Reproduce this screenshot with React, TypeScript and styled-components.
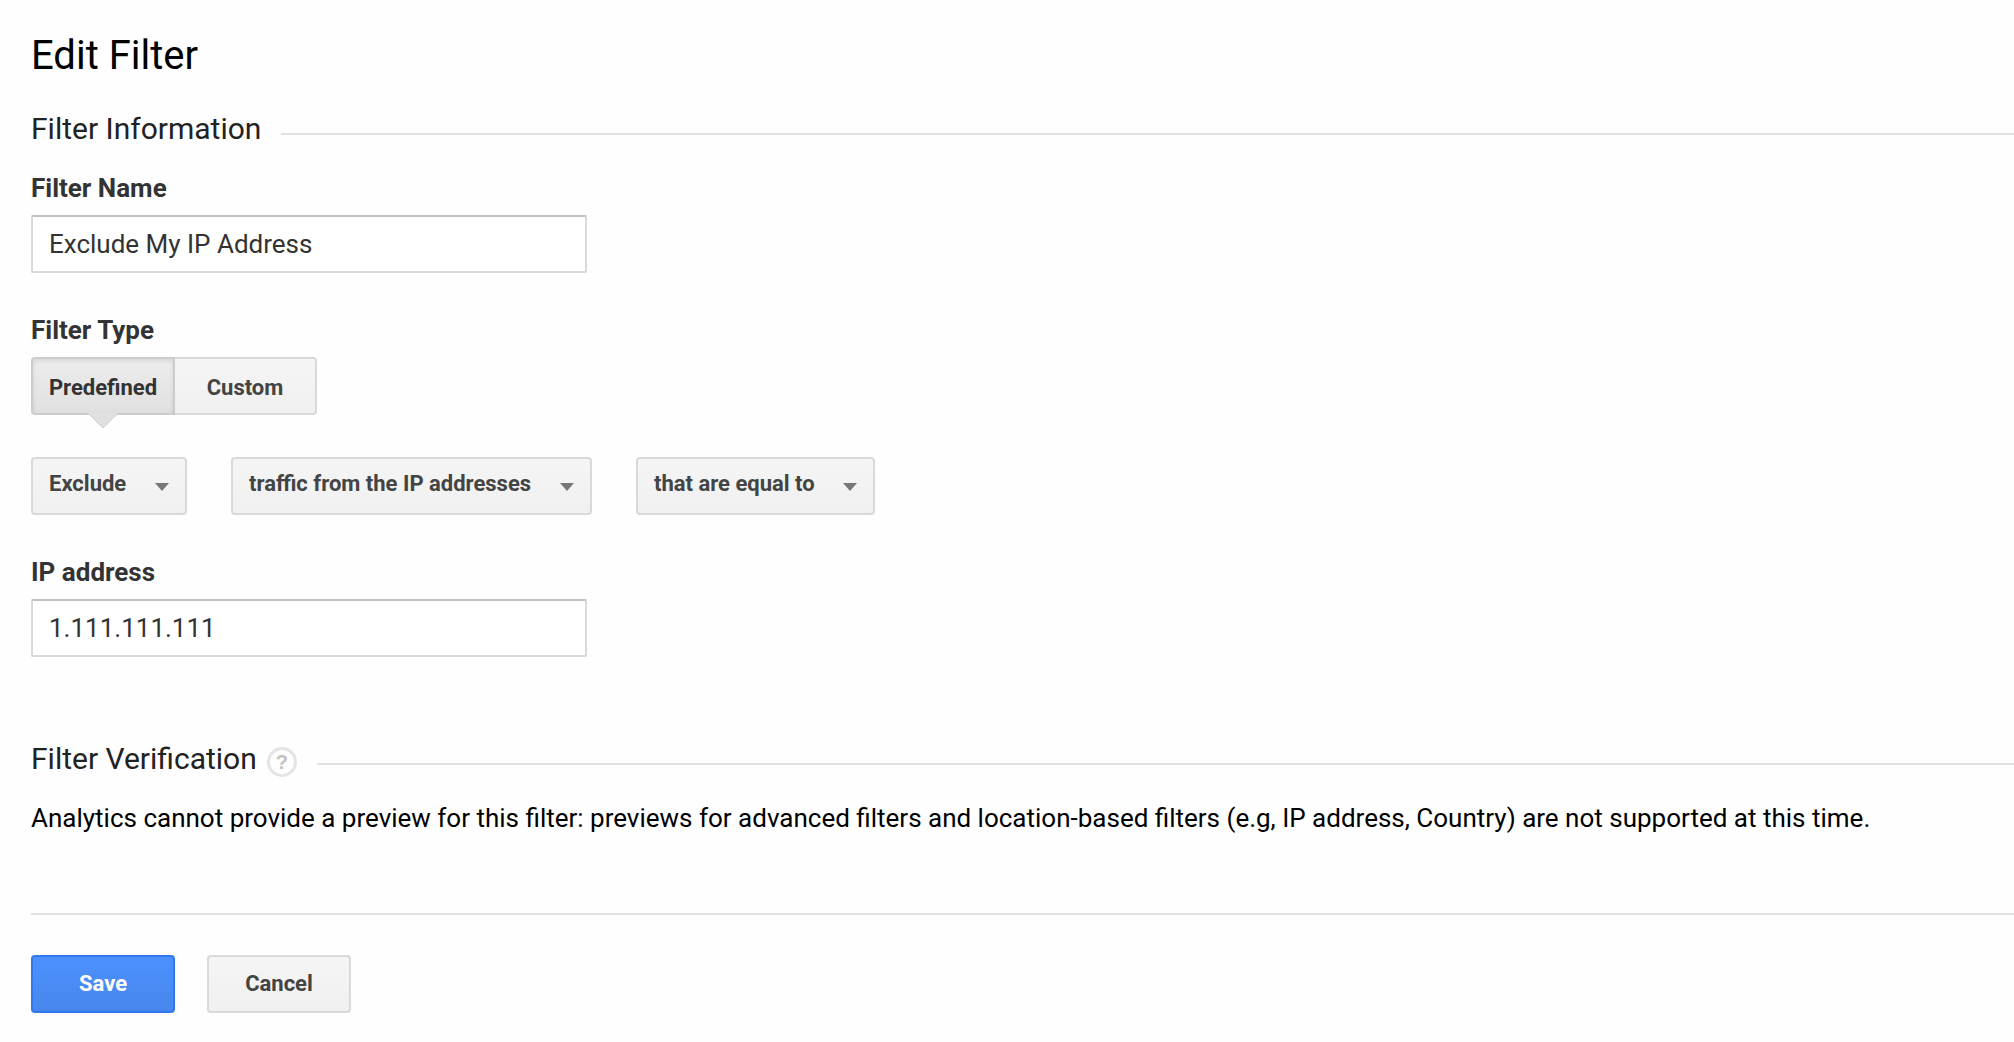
import React, { useState } from "react";
import styled, { createGlobalStyle, css } from "styled-components";

const GlobalStyle = createGlobalStyle`
  *, *::before, *::after { box-sizing: border-box; }
  body {
    margin: 0;
    background: #fefefe;
    color: #000;
    font-family: Roboto, "Liberation Sans", sans-serif;
    font-size: 26px;
    line-height: 32px;
  }
`;

const Page = styled.main`
  padding: 32px 0 28px 31px;
`;

const Title = styled.h1`
  margin: 0 0 31px;
  font-size: 40px;
  font-weight: 400;
  line-height: 48px;
`;

const SectionHeader = styled.div`
  display: flex;
  align-items: flex-end;
  margin-bottom: 25px;

  &::after {
    content: "";
    flex: 1;
    height: 2px;
    margin: 0 0 12px 20px;
    background: #e2e2e2;
  }
`;

const SectionTitle = styled.h2`
  margin: 0;
  color: #222;
  font-size: 30px;
  font-weight: 400;
  line-height: 36px;
`;

const HelpButton = styled.button`
  display: block;
  width: 30px;
  height: 30px;
  margin-left: 10px;
  padding: 0;
  border: 3px solid #e4e4e4;
  border-radius: 50%;
  background: transparent;
  color: #c2c2c2;
  font-family: "Liberation Sans", sans-serif;
  font-size: 20px;
  font-weight: 700;
  line-height: 24px;
  text-align: center;
`;

const Field = styled.div`
  display: flex;
  flex-direction: column;
  align-items: flex-start;
  gap: 11px;
`;

const labelText = css`
  color: #333;
  font-size: 26px;
  font-weight: 700;
  line-height: 32px;
`;

const Label = styled.label`
  ${labelText}
`;

const GroupLabel = styled.span`
  ${labelText}
`;

const TextInput = styled.input`
  width: 556px;
  max-width: 100%;
  height: 58px;
  padding: 0 16px;
  border: 2px solid #d9d9d9;
  border-top-color: #c0c0c0;
  border-radius: 2px;
  background: #fff;
  color: #333;
  font: inherit;
`;

const FilterForm = styled.form`
  display: flex;
  flex-direction: column;
  gap: 41px;
`;

const FilterDefinition = styled.div`
  display: flex;
  flex-direction: column;
  gap: 42px;
`;

const buttonFace = css`
  height: 58px;
  border: 2px solid #d9d9d9;
  border-radius: 4px;
  background: linear-gradient(#f5f5f5, #f0f0f0);
  color: #444;
  font-family: inherit;
  font-size: 22px;
  font-weight: 700;
  line-height: 32px;
`;

const ToggleGroup = styled.div`
  display: flex;
`;

const ToggleButton = styled.button<{ $active: boolean }>`
  ${buttonFace}
  position: relative;
  width: 144px;
  padding: 4px 0 0;

  &:first-child {
    border-radius: 4px 0 0 4px;
  }

  &:last-child {
    width: 142px;
    border-left: 0;
    border-radius: 0 4px 4px 0;
  }

  ${({ $active }) =>
    $active &&
    css`
      border-color: #ccc;
      background: linear-gradient(#ededed, #e0e0e0);
      box-shadow: inset 0 2px 4px rgba(0, 0, 0, 0.1);
      color: #333;
    `}
`;

const Pointer = styled.svg`
  position: absolute;
  top: 54px;
  left: 50%;
  margin-left: -15px;
`;

const Rules = styled.div`
  display: flex;
  flex-wrap: wrap;
  gap: 44px;
`;

const SelectBox = styled.div`
  position: relative;
`;

const Select = styled.select`
  ${buttonFace}
  display: block;
  appearance: none;
  padding: 0 58px 4px 16px;
`;

const Caret = styled.svg`
  position: absolute;
  top: 26px;
  right: 18px;
  pointer-events: none;
`;

const Verification = styled.section`
  margin-top: 84px;
`;

const Note = styled.p`
  margin: 0;
`;

const Footer = styled.footer`
  display: flex;
  gap: 32px;
  margin-top: 79px;
  padding-top: 40px;
  border-top: 2px solid #e2e2e2;
`;

const ActionButton = styled.button<{ $primary?: boolean }>`
  ${buttonFace}
  width: 144px;
  padding: 0;

  ${({ $primary }) =>
    $primary &&
    css`
      border-color: #3079ed;
      background: linear-gradient(#4d90fe, #4787ed);
      color: #fff;
    `}
`;

const filterTypes = ["Predefined", "Custom"];

const rules = [
  { label: "Filter action", value: "Exclude" },
  { label: "Source or destination", value: "traffic from the IP addresses" },
  { label: "Expression", value: "that are equal to" },
];

export default function App() {
  const [filterType, setFilterType] = useState("Predefined");

  return (
    <>
      <GlobalStyle />
      <Page>
        <Title>Edit Filter</Title>
        <SectionHeader>
          <SectionTitle>Filter Information</SectionTitle>
        </SectionHeader>
        <FilterForm id="filter-form" onSubmit={(e) => e.preventDefault()}>
          <Field>
            <Label htmlFor="filter-name">Filter Name</Label>
            <TextInput id="filter-name" defaultValue="Exclude My IP Address" />
          </Field>
          <FilterDefinition>
            <Field>
              <GroupLabel id="filter-type">Filter Type</GroupLabel>
              <ToggleGroup role="group" aria-labelledby="filter-type">
                {filterTypes.map((type) => (
                  <ToggleButton
                    key={type}
                    type="button"
                    $active={type === filterType}
                    aria-pressed={type === filterType}
                    onClick={() => setFilterType(type)}
                  >
                    {type}
                    {type === filterType && (
                      <Pointer width="30" height="16" viewBox="0 0 30 16" aria-hidden="true">
                        <path d="M0 0H30L15 15Z" fill="#e0e0e0" />
                        <path d="M1 1L15 15L29 1" fill="none" stroke="#ccc" />
                      </Pointer>
                    )}
                  </ToggleButton>
                ))}
              </ToggleGroup>
            </Field>
            <Rules>
              {rules.map((rule) => (
                <SelectBox key={rule.value}>
                  <Select aria-label={rule.label}>
                    <option>{rule.value}</option>
                  </Select>
                  <Caret width="14" height="8" viewBox="0 0 14 8" aria-hidden="true">
                    <path d="M0 0H14L7 8Z" fill="#777" />
                  </Caret>
                </SelectBox>
              ))}
            </Rules>
          </FilterDefinition>
          <Field>
            <Label htmlFor="ip-address">IP address</Label>
            <TextInput id="ip-address" defaultValue="1.111.111.111" />
          </Field>
        </FilterForm>
        <Verification>
          <SectionHeader>
            <SectionTitle>Filter Verification</SectionTitle>
            <HelpButton type="button" aria-label="Help">?</HelpButton>
          </SectionHeader>
          <Note>
            Analytics cannot provide a preview for this filter: previews for advanced filters and
            location-based filters (e.g, IP address, Country) are not supported at this time.
          </Note>
        </Verification>
        <Footer>
          <ActionButton type="submit" form="filter-form" $primary>
            Save
          </ActionButton>
          <ActionButton type="button">Cancel</ActionButton>
        </Footer>
      </Page>
    </>
  );
}
